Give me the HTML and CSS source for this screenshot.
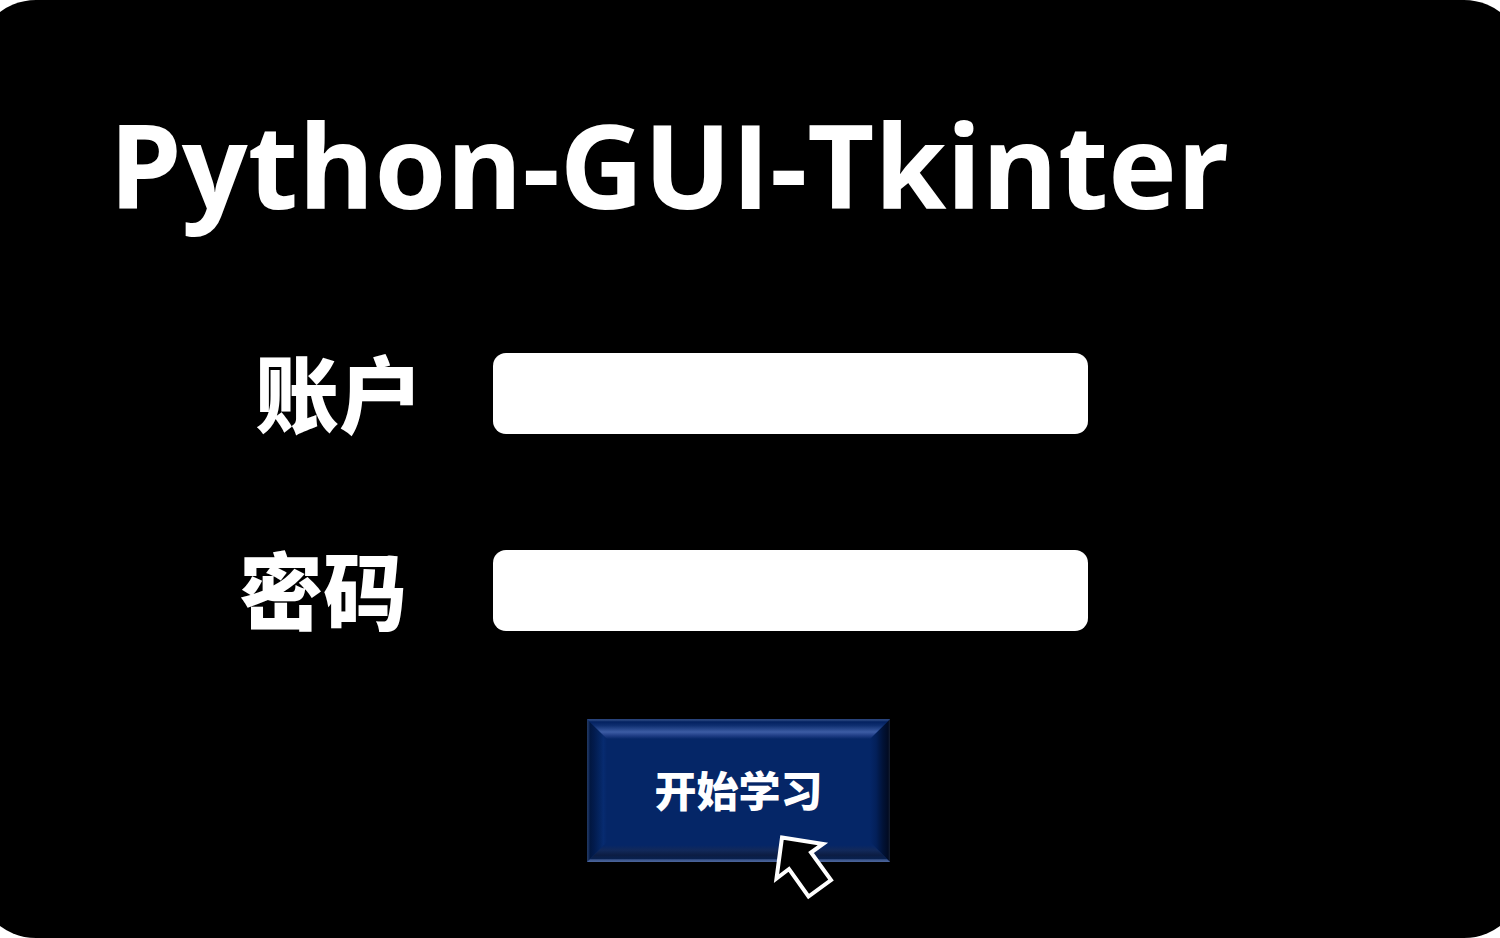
FILE: index.html
```html
<!DOCTYPE html>
<html lang="zh-CN">
<head>
<meta charset="utf-8">
<meta name="viewport" content="width=device-width, initial-scale=1">
<title>Python-GUI-Tkinter</title>
<link rel="stylesheet" href="styles.css">
</head>
<body>
<main class="panel">
  <h1 class="title">Python-GUI-Tkinter</h1>
  <form class="login">
    <div class="field">
      <label class="field-label" for="account">账户</label>
      <input class="field-input" id="account" type="text" autocomplete="username">
    </div>
    <div class="field">
      <label class="field-label field-label-wide" for="password">密码</label>
      <input class="field-input" id="password" type="password" autocomplete="current-password">
    </div>
    <div class="actions">
      <button class="start" type="button">
        <svg class="bevel" viewBox="0 0 303 143" preserveAspectRatio="none" aria-hidden="true">
          <defs>
            <linearGradient id="top" x2="0" y2="1">
              <stop offset="0" stop-color="#2c467c"/>
              <stop offset=".09" stop-color="#1d3b77"/>
              <stop offset=".14" stop-color="#032160"/>
              <stop offset=".32" stop-color="#0e2e6f"/>
              <stop offset=".65" stop-color="#3c5ca4"/>
              <stop offset=".82" stop-color="#213f87"/>
              <stop offset="1" stop-color="#052667"/>
            </linearGradient>
            <linearGradient id="left">
              <stop offset="0" stop-color="#213861"/>
              <stop offset=".09" stop-color="#142b58"/>
              <stop offset=".15" stop-color="#011741"/>
              <stop offset=".35" stop-color="#021b4d"/>
              <stop offset=".62" stop-color="#042460"/>
              <stop offset=".82" stop-color="#072b70"/>
              <stop offset="1" stop-color="#052667"/>
            </linearGradient>
            <linearGradient id="right">
              <stop offset="0" stop-color="#052667"/>
              <stop offset=".3" stop-color="#03205a"/>
              <stop offset=".65" stop-color="#011236"/>
              <stop offset=".9" stop-color="#010b23"/>
              <stop offset="1" stop-color="#171f30"/>
            </linearGradient>
            <linearGradient id="bottom" x2="0" y2="1">
              <stop offset="0" stop-color="#052667"/>
              <stop offset=".3" stop-color="#12295b"/>
              <stop offset=".6" stop-color="#0c1d43"/>
              <stop offset=".8" stop-color="#08204e"/>
              <stop offset=".87" stop-color="#3a548a"/>
              <stop offset="1" stop-color="#4c659b"/>
            </linearGradient>
          </defs>
          <path fill="#052667" d="M0 0H303V143H0z"/>
          <path fill="url(#left)" d="M0 0L20 20V123L0 143z"/>
          <path fill="url(#right)" d="M303 0L283 20V123L303 143z"/>
          <path fill="url(#top)" d="M0 0H303L283 20H20z"/>
          <path fill="url(#bottom)" d="M0 143H303L286 126H17z"/>
        </svg>
        <span class="start-text">开始学习</span>
      </button>
      <svg class="pointer" viewBox="0 0 62 66" aria-hidden="true">
        <path d="M10 3.500L51 10L39 18.500L59 46L36.500 62.500L17 35L4.500 44.500z"/>
      </svg>
    </div>
  </form>
</main>
</body>
</html>
```
FILE: styles.css
```css
* {
  box-sizing: border-box;
}

body {
  margin: 0;
  background: #fff;
  color: #fff;
  font-family: "Open Sans", "Noto Sans CJK SC", sans-serif;
  overflow-x: hidden;
}

/* The black card bleeds past both sides of the window. */
.panel {
  min-height: 100vh;
  margin: 0 -24px;
  padding: 84px 24px 72px;
  border-radius: 60px;
  background: #000;
}

.title {
  margin: 0;
  padding-left: 109px;
  font-size: 116px;
  font-weight: 700;
  line-height: 160px;
  white-space: nowrap;
}

.login {
  display: flex;
  flex-direction: column;
  padding-top: 109px;
}

.field {
  display: flex;
  align-items: center;
  height: 81px;
  margin-bottom: 116px;
}

.field-label {
  flex: none;
  width: 493px;
  padding: 0 70px 6px 0;
  font-family: "Noto Sans CJK SC", sans-serif;
  font-size: 84px;
  font-weight: 900;
  line-height: 81px;
  text-align: right;
}

.field-label-wide {
  padding-right: 86px;
}

.field-input {
  flex: 0 1 595px;
  min-width: 0;
  height: 81px;
  padding: 0 20px;
  border: 0;
  border-radius: 13px;
  background: #fff;
  color: #000;
  font: 40px "Open Sans", "Noto Sans CJK SC", sans-serif;
}

.actions {
  position: relative;
  align-self: flex-start;
  margin: -28px 0 0 587px;
}

.start {
  position: relative;
  display: block;
  width: 303px;
  height: 143px;
  padding: 0 0 4px;
  border: 0;
  background: #052667;
  color: #fff;
  font: 900 42px "Noto Sans CJK SC", sans-serif;
  cursor: pointer;
}

.bevel {
  position: absolute;
  inset: 0;
  width: 100%;
  height: 100%;
}

.start-text {
  position: relative;
}

.pointer {
  position: absolute;
  right: 56px;
  bottom: -38px;
  width: 62px;
  height: 66px;
  fill: #000;
  stroke: #fff;
  stroke-width: 4;
  pointer-events: none;
}
```
